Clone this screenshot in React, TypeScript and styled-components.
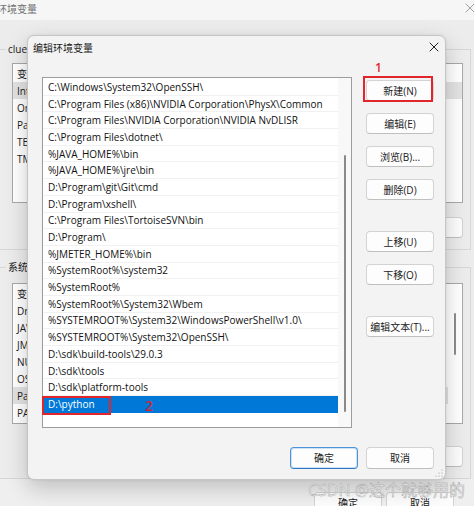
import React from "react";
import styled, { createGlobalStyle } from "styled-components";

const GlobalStyle = createGlobalStyle`
  html, body {
    margin: 0;
    padding: 0;
    width: 474px;
    height: 506px;
    overflow: hidden;
    background: #efefef;
  }
  body {
    font-family: "Open Sans", "Noto Sans CJK SC", sans-serif;
    -webkit-font-smoothing: antialiased;
  }
  * { box-sizing: border-box; }
`;

const Stage = styled.div`
  position: relative;
  width: 474px;
  height: 506px;
  overflow: hidden;
  background: #efefef;
  font-size: 10px;
  color: #1a1a1a;
`;

/* ---------- background window (环境变量) ---------- */
const BackWindow = styled.section`
  position: absolute;
  left: -14px;
  top: -4px;
  width: 491px;
  height: 522px;
  display: flex;
  flex-direction: column;
  background: #ececec;
`;

const BackTitleBar = styled.header`
  height: 24px;
  flex: none;
  display: flex;
  align-items: center;
  justify-content: space-between;
  padding: 0 2px 0 11px;
  background: #f6f6f6;
  color: #707070;
  font-size: 10px;
`;

const BackBody = styled.div`
  display: flex;
  flex-direction: column;
  padding: 22px 6px 0 13px;
`;

const GroupBox = styled.fieldset<{ $mt?: number; $pt: number }>`
  margin: ${(p) => p.$mt ?? 0}px 0 0 0;
  padding: ${(p) => p.$pt}px 7px 11px 12px;
  border: 1px solid #d6d6d6;
  min-width: 0;
`;

const GroupLegend = styled.legend`
  font-size: 10px;
  line-height: 14px;
  padding: 0 2px;
  margin-left: -6px;
  color: #1a1a1a;
`;

const BackList = styled.div<{ $h: number }>`
  height: ${(p) => p.$h}px;
  background: #fff;
  border: 1px solid #a8a8a8;
  display: flex;
  overflow: hidden;
`;

const BackListColumn = styled.div`
  flex: 1;
  display: flex;
  flex-direction: column;
`;

const BackHeader = styled.div`
  height: 18px;
  display: flex;
  align-items: center;
  padding-left: 4px;
  font-size: 10px;
`;

const BackRow = styled.div<{ $selected?: boolean }>`
  height: 17px;
  display: flex;
  align-items: center;
  padding-left: 4px;
  font-size: 10px;
  white-space: nowrap;
  overflow: hidden;
  background: ${(p) => (p.$selected ? "#e3e3e3" : "transparent")};
`;

const BackScroll = styled.div<{ $top: number; $len: number }>`
  width: 14px;
  flex: none;
  display: flex;
  justify-content: center;
  padding-top: ${(p) => p.$top}px;
  &::before {
    content: "";
    display: block;
    width: 2px;
    height: ${(p) => p.$len}px;
    border-radius: 1px;
    background: #8c8c8c;
  }
`;

const ButtonRow = styled.div<{ $mt: number }>`
  margin-top: ${(p) => p.$mt}px;
  display: flex;
  justify-content: flex-end;
  gap: 6px;
`;

const WinButton = styled.button<{ $w?: number; $h?: number; $primary?: boolean }>`
  width: ${(p) => (p.$w ? `${p.$w}px` : "100%")};
  height: ${(p) => p.$h ?? 21}px;
  flex: none;
  padding: 0;
  margin: 0;
  border-radius: 4px;
  background: #fdfdfd;
  border: 1px solid ${(p) => (p.$primary ? "#4d93d9" : "#d3d3d3")};
  border-bottom-color: ${(p) => (p.$primary ? "#2f78c4" : "#bfbfbf")};
  box-shadow: ${(p) => (p.$primary ? "inset 0 0 0 1px #cfe2f5" : "none")};
  font-family: "Open Sans", "Noto Sans CJK SC", sans-serif;
  font-size: 10px;
  line-height: 1;
  color: #1a1a1a;
  white-space: nowrap;
`;

const BackFooter = styled.div`
  display: flex;
  justify-content: flex-end;
  gap: 4px;
  padding: 13px 23px 0 0;
  background: #efefef;
  flex: 1;
`;

/* ---------- foreground dialog (编辑环境变量) ---------- */
const Dialog = styled.section`
  position: absolute;
  left: 27px;
  top: 35px;
  width: 419px;
  height: 445px;
  background: #f3f3f3;
  border: 1px solid #c6c6c6;
  border-radius: 7px;
  box-shadow: 0 8px 22px rgba(0, 0, 0, 0.2), 0 0 3px rgba(0, 0, 0, 0.08);
  display: flex;
  flex-direction: column;
`;

const DialogTitleBar = styled.header`
  height: 22px;
  flex: none;
  display: flex;
  align-items: center;
  justify-content: space-between;
  padding: 0 6px 0 5px;
  font-size: 10px;
  color: #1a1a1a;
`;

const DialogBody = styled.div`
  margin-top: 19px;
  display: flex;
  gap: 14px;
  padding: 0 11px 0 14px;
`;

const PathList = styled.div`
  flex: 1;
  height: 351px;
  background: #fff;
  border: 1px solid #9c9c9c;
  display: flex;
  overflow: hidden;
`;

const PathRows = styled.div`
  flex: 1;
  min-width: 0;
  padding-top: 1px;
  display: flex;
  flex-direction: column;
`;

const PathRow = styled.div<{ $selected?: boolean }>`
  height: 16.7px;
  flex: none;
  display: flex;
  align-items: center;
  padding-left: 5px;
  font-family: "Open Sans", sans-serif;
  font-size: 10px;
  white-space: nowrap;
  overflow: hidden;
  border-bottom: 1px solid ${(p) => (p.$selected ? "#0078d7" : "#f1f1f1")};
  background: ${(p) => (p.$selected ? "#0078d7" : "#fff")};
  color: ${(p) => (p.$selected ? "#fff" : "#111")};
`;

const Scrollbar = styled.div`
  width: 13px;
  flex: none;
  background: #f8f8f8;
  display: flex;
  flex-direction: column;
  align-items: center;
  padding: 77px 0 15px;
`;

const ScrollThumb = styled.div`
  width: 2px;
  flex: 1;
  border-radius: 1px;
  background: #898989;
`;

const SideColumn = styled.div`
  width: 68px;
  flex: none;
  display: flex;
  flex-direction: column;
  gap: 12px;
  padding-top: 3px;
`;

const SideButtonWrap = styled.div<{ $extra: number }>`
  margin-top: ${(p) => p.$extra}px;
`;

const DialogFooter = styled.div`
  display: flex;
  justify-content: flex-end;
  gap: 8px;
  padding: 19px 11px 0 0;
`;

const Grip = styled.svg`
  position: absolute;
  right: 2px;
  bottom: 2px;
`;

/* ---------- annotations ---------- */
const RedBox = styled.div<{ $x: number; $y: number; $w: number; $h: number }>`
  position: absolute;
  left: ${(p) => p.$x}px;
  top: ${(p) => p.$y}px;
  width: ${(p) => p.$w}px;
  height: ${(p) => p.$h}px;
  border: 2px solid #e2242b;
`;

const RedMark = styled.span<{ $x: number; $y: number; $color: string; $size: number }>`
  position: absolute;
  left: ${(p) => p.$x}px;
  top: ${(p) => p.$y}px;
  font-family: "Open Sans", sans-serif;
  font-size: ${(p) => p.$size}px;
  font-weight: 600;
  line-height: 18px;
  color: ${(p) => p.$color};
`;

const Watermark = styled.div`
  position: absolute;
  left: 308px;
  top: 480px;
  font-family: "Open Sans", "Noto Sans CJK SC", sans-serif;
  font-size: 16px;
  line-height: 20px;
  color: rgba(240, 240, 240, 0.9);
  -webkit-text-stroke: 0.4px #9a9a9a;
  white-space: nowrap;
`;

const CloseIcon = ({ size, color }: { size: number; color: string }) => (
  <svg width={size} height={size} viewBox="0 0 10 10">
    <path d="M1 1 L9 9 M9 1 L1 9" stroke={color} strokeWidth="1" strokeLinecap="round" />
  </svg>
);

const pathEntries = [
  "C:\\Windows\\System32\\OpenSSH\\",
  "C:\\Program Files (x86)\\NVIDIA Corporation\\PhysX\\Common",
  "C:\\Program Files\\NVIDIA Corporation\\NVIDIA NvDLISR",
  "C:\\Program Files\\dotnet\\",
  "%JAVA_HOME%\\bin",
  "%JAVA_HOME%\\jre\\bin",
  "D:\\Program\\git\\Git\\cmd",
  "D:\\Program\\xshell\\",
  "C:\\Program Files\\TortoiseSVN\\bin",
  "D:\\Program\\",
  "%JMETER_HOME%\\bin",
  "%SystemRoot%\\system32",
  "%SystemRoot%",
  "%SystemRoot%\\System32\\Wbem",
  "%SYSTEMROOT%\\System32\\WindowsPowerShell\\v1.0\\",
  "%SYSTEMROOT%\\System32\\OpenSSH\\",
  "D:\\sdk\\build-tools\\29.0.3",
  "D:\\sdk\\tools",
  "D:\\sdk\\platform-tools",
  "D:\\python",
];

const sideButtons = [
  { label: "新建(N)", extra: 0 },
  { label: "编辑(E)", extra: 0 },
  { label: "浏览(B)...", extra: 0 },
  { label: "删除(D)", extra: 0 },
  { label: "上移(U)", extra: 19 },
  { label: "下移(O)", extra: 0 },
  { label: "编辑文本(T)...", extra: 19 },
];

const userVars = ["IntelliJ", "OneDrive", "Path", "TEMP", "TMP"];
const systemVars = ["DriverData", "JAVA_HOME", "JMETER", "NUMBER", "OS", "Path", "PATHEXT"];

export default function App() {
  const selectedIndex = pathEntries.length - 1;
  return (
    <>
      <GlobalStyle />
      <Stage>
        <BackWindow>
          <BackTitleBar>
            <span>环境变量</span>
            <CloseIcon size={10} color="#a0a0a0" />
          </BackTitleBar>
          <BackBody>
            <GroupBox $pt={7}>
              <GroupLegend>clue 的用户变量</GroupLegend>
              <BackList $h={140}>
                <BackListColumn>
                  <BackHeader>变量</BackHeader>
                  {userVars.map((k, i) => (
                    <BackRow key={k} $selected={i === 0}>
                      {k}
                    </BackRow>
                  ))}
                </BackListColumn>
              </BackList>
              <ButtonRow $mt={14}>
                <WinButton $w={68} />
                <WinButton $w={68} />
                <WinButton $w={68} />
              </ButtonRow>
            </GroupBox>
            <GroupBox $mt={10} $pt={9}>
              <GroupLegend>系统变量</GroupLegend>
              <BackList $h={141}>
                <BackListColumn>
                  <BackHeader>变量</BackHeader>
                  {systemVars.map((k, i) => (
                    <BackRow key={k} $selected={i === 5}>
                      {k}
                    </BackRow>
                  ))}
                </BackListColumn>
                <BackScroll $top={29} $len={42} />
              </BackList>
              <ButtonRow $mt={22}>
                <WinButton $w={68} />
                <WinButton $w={68} />
                <WinButton $w={68} />
              </ButtonRow>
            </GroupBox>
          </BackBody>
          <BackFooter>
            <WinButton $w={68} $h={22}>确定</WinButton>
            <WinButton $w={68} $h={22}>取消</WinButton>
          </BackFooter>
        </BackWindow>

        <Dialog>
          <DialogTitleBar>
            <span>编辑环境变量</span>
            <CloseIcon size={10} color="#222" />
          </DialogTitleBar>
          <DialogBody>
            <PathList>
              <PathRows>
                {pathEntries.map((p, i) => (
                  <PathRow key={p} $selected={i === selectedIndex}>
                    {p}
                  </PathRow>
                ))}
              </PathRows>
              <Scrollbar>
                <ScrollThumb />
              </Scrollbar>
            </PathList>
            <SideColumn>
              {sideButtons.map((b) => (
                <SideButtonWrap key={b.label} $extra={b.extra}>
                  <WinButton>{b.label}</WinButton>
                </SideButtonWrap>
              ))}
            </SideColumn>
          </DialogBody>
          <DialogFooter>
            <WinButton $w={68} $h={22} $primary>
              确定
            </WinButton>
            <WinButton $w={68} $h={22}>
              取消
            </WinButton>
          </DialogFooter>
          <Grip width="8" height="8" viewBox="0 0 8 8">
            <circle cx="7" cy="1" r="0.6" fill="#9a9a9a" />
            <circle cx="4" cy="4" r="0.6" fill="#9a9a9a" />
            <circle cx="7" cy="4" r="0.6" fill="#9a9a9a" />
            <circle cx="1" cy="7" r="0.6" fill="#9a9a9a" />
            <circle cx="4" cy="7" r="0.6" fill="#9a9a9a" />
            <circle cx="7" cy="7" r="0.6" fill="#9a9a9a" />
          </Grip>
        </Dialog>

        <RedMark $x={375} $y={59} $color="#e0282e" $size={12}>1</RedMark>
        <RedBox $x={363} $y={76} $w={70} $h={26} />
        <RedBox $x={42} $y={396} $w={69} $h={19} />
        <RedMark $x={145} $y={397} $color="#c8283c" $size={14}>2</RedMark>
        <Watermark>CSDN @这个就够用的</Watermark>
      </Stage>
    </>
  );
}
